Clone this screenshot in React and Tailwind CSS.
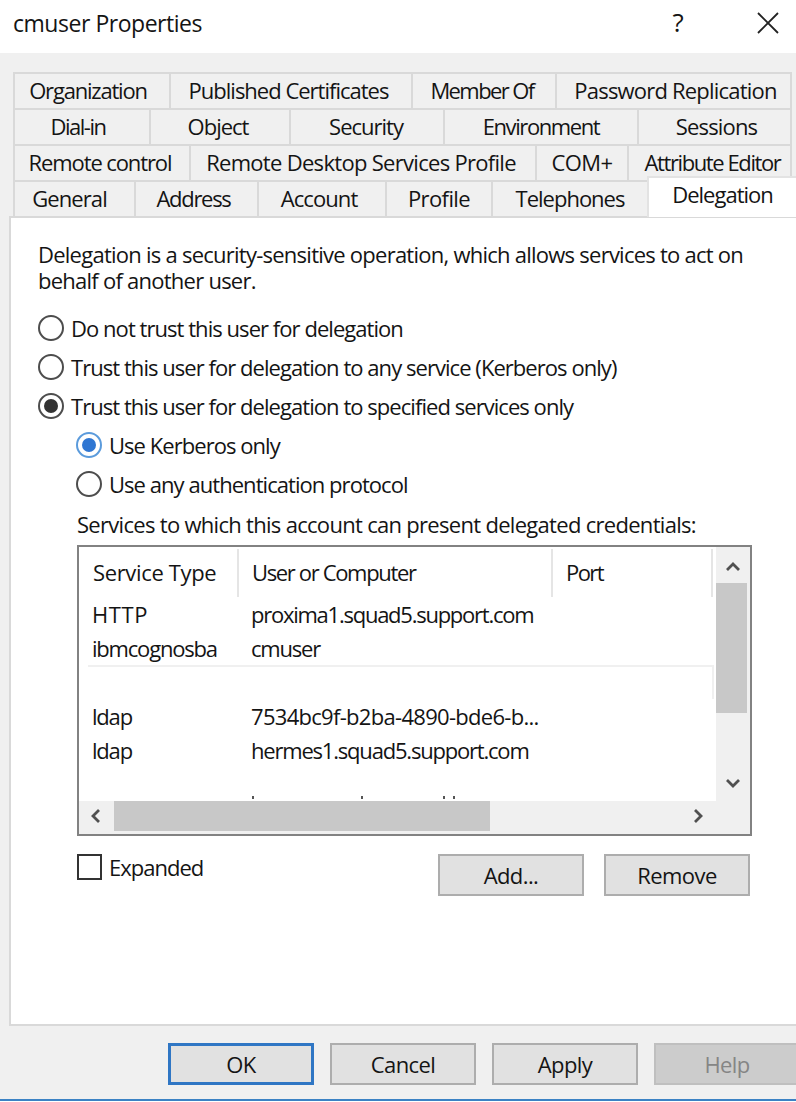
import { useState } from 'react';

const tabRows = [
  [
    ['Organization', 'w-[156px] pr-[8px] tracking-[-1.2px]'],
    ['Published Certificates', 'w-[242px] pr-[5px] tracking-[-1px]'],
    ['Member Of', 'w-[144px] pr-[4px] tracking-[-1.6px]'],
    ['Password Replication', 'w-[237px] pl-[4px] tracking-[-0.8px]'],
  ],
  [
    ['Dial-in', 'w-[136px] pr-[8px] tracking-[-1.5px]'],
    ['Object', 'w-[140px] pr-[4px] tracking-[-1px]'],
    ['Security', 'w-[154px] pr-[2px] tracking-[-1px]'],
    ['Environment', 'w-[194px] tracking-[-1.4px]'],
    ['Sessions', 'w-[155px] pl-[4px] tracking-[-0.85px]'],
  ],
  [
    ['Remote control', 'w-[176px] pr-[4px] tracking-[-1.1px]'],
    ['Remote Desktop Services Profile', 'w-[346px] pr-[4px] tracking-[-0.7px]'],
    ['COM+', 'w-[92px] tracking-[-0.6px]'],
    ['Attribute Editor', 'w-[165px] pl-[6px] tracking-[-1.4px]'],
  ],
  [
    ['General', 'w-[121px] pr-[10px] tracking-[-0.9px]'],
    ['Address', 'w-[123px] pr-[6px] tracking-[-1.3px]'],
    ['Account', 'w-[128px] pr-[6px] tracking-[-0.9px]'],
    ['Profile', 'w-[106px] tracking-[-0.6px]'],
    ['Telephones', 'w-[156px] tracking-[-1px]'],
  ],
];

const services = [
  [['HTTP', 'tracking-[0.6px]'], ['proxima1.squad5.support.com', 'tracking-[-1.25px]']],
  [['ibmcognosba', 'tracking-[-1.2px]'], ['cmuser', 'tracking-[-1.2px]']],
  null,
  [['ldap', 'tracking-[-1.2px]'], ['7534bc9f-b2ba-4890-bde6-b...', 'tracking-[-0.7px]']],
  [['ldap', 'tracking-[-1.2px]'], ['hermes1.squad5.support.com', 'tracking-[-1.2px]']],
];

function Radio({ checked, accent }) {
  return (
    <span
      className={`flex h-[26px] w-[26px] shrink-0 items-center justify-center rounded-full border-2 bg-white ${
        accent ? 'border-[#5b9bdc]' : 'border-[#4d4d4d]'
      }`}
    >
      {checked && (
        <span className={`h-[14px] w-[14px] rounded-full ${accent ? 'bg-[#2f76d2]' : 'bg-[#333333]'}`} />
      )}
    </span>
  );
}

function RadioRow({ label, checked, accent, indent }) {
  return (
    <div className={`flex h-[39px] items-center gap-[7px] tracking-[-0.95px] ${indent ? 'pl-[38px]' : ''}`}>
      <Radio checked={checked} accent={accent} />
      <span>{label}</span>
    </div>
  );
}

function Chevron({ dir }) {
  const d = {
    up: 'M2 11 L8 5 L14 11',
    down: 'M2 5 L8 11 L14 5',
    left: 'M10 2 L4 8 L10 14',
    right: 'M5 2 L11 8 L5 14',
  }[dir];
  return (
    <svg width="16" height="16" viewBox="0 0 16 16" fill="none" stroke="#505050" strokeWidth="2.8">
      <path d={d} />
    </svg>
  );
}

function DialogButton({ children, className = 'border-2 border-[#adadad] bg-[#e1e1e1]' }) {
  return (
    <button type="button" className={`flex h-[42px] w-[146px] shrink-0 items-center justify-center ${className}`}>
      {children}
    </button>
  );
}

function ServiceList() {
  return (
    <div className="ml-[39px] flex h-[291px] w-[675px] flex-col border-2 border-[#828282] bg-[#f0f0f0]">
      <div className="flex h-[254px]">
        <div className="w-[637px] overflow-hidden bg-white">
          <div className="flex h-[50px] pt-[2px]">
            <span className="w-[160px] border-r-2 border-[#e5e5e5] pl-[14px] leading-[47px] tracking-[-0.35px]">Service Type</span>
            <span className="w-[314px] border-r-2 border-[#e5e5e5] pl-[13px] leading-[47px] tracking-[-1.35px]">User or Computer</span>
            <span className="w-[160px] border-r-2 border-[#e5e5e5] pl-[13px] leading-[47px] tracking-[-1.6px]">Port</span>
          </div>
          {services.map((row, i) =>
            row ? (
              <div key={i} className="flex h-[34px] items-center">
                <span className={`w-[160px] pl-[13px] ${row[0][1]}`}>{row[0][0]}</span>
                <span className={`pl-[12px] ${row[1][1]}`}>{row[1][0]}</span>
              </div>
            ) : (
              <div key={i} className="ml-[9px] h-[34px] w-[626px] border-t-2 border-r-2 border-[#f0f0f0]" />
            ),
          )}
          {/* tops of the next row, cut off by the scrollbar */}
          <div className="mt-[29px] flex h-[4px] items-start">
            <span className="ml-[173px] h-[3px] w-[2px] bg-[#555555]" />
            <span className="ml-[107px] h-[3px] w-[2px] bg-[#555555]" />
            <span className="ml-[80px] h-[3px] w-[2px] bg-[#555555]" />
            <span className="ml-[8px] h-[3px] w-[2px] bg-[#555555]" />
          </div>
        </div>
        <div className="flex w-[34px] flex-col pt-[2px]">
          <div className="flex h-[34px] items-center justify-center pt-[2px]">
            <Chevron dir="up" />
          </div>
          <div className="mr-[3px] h-[130px] bg-[#c8c8c8]" />
          <div className="flex flex-1 items-center justify-center pt-[52px]">
            <Chevron dir="down" />
          </div>
        </div>
      </div>
      <div className="flex h-[30px] items-center">
        <div className="flex w-[35px] items-center justify-center">
          <Chevron dir="left" />
        </div>
        <div className="h-full w-[376px] bg-[#c8c8c8]" />
        <div className="flex flex-1 items-center justify-end pr-[44px]">
          <Chevron dir="right" />
        </div>
      </div>
    </div>
  );
}

export default function App() {
  const [expanded, setExpanded] = useState(false);

  return (
    <div
      className="flex h-[1102px] w-[796px] flex-col overflow-hidden bg-white text-[22px] leading-[26px] tracking-[-0.6px] text-[#141414]"
      style={{ fontFamily: '"Open Sans", "Noto Sans", sans-serif' }}
    >
      {/* title bar */}
      <div className="flex h-[53px] shrink-0 items-center pb-[8px] pl-[13px]">
        <span className="flex-1 text-[23px] tracking-[-0.47px]">cmuser Properties</span>
        <span className="mr-[74px] pb-[2px] text-[26px]">?</span>
        <svg className="mr-[17px]" width="22" height="22" viewBox="0 0 22 22" stroke="#222222" strokeWidth="1.8">
          <path d="M1 1 L21 21 M21 1 L1 21" />
        </svg>
      </div>

      <div className="flex flex-1 flex-col bg-[#f0f0f0] pt-[19px]">
        {/* tab rows */}
        <div className="ml-[13px]">
          {tabRows.map((row, i) => (
            <div key={i} className="flex h-[36px]">
              {row.map(([label, width], j) => (
                <div
                  key={label}
                  className={`${width} flex items-center justify-center border-t-2 border-l-2 border-[#d9d9d9] pb-[2px] ${
                    j === row.length - 1 && i < 3 ? 'border-r-2' : ''
                  }`}
                >
                  {label}
                </div>
              ))}
              {i === 3 && (
                <div className="relative z-10 -mt-[4px] flex h-[41px] w-[149px] items-center justify-center border-t-2 border-l-2 border-[#e3e3e3] bg-white pb-[7px] tracking-[-1px]">
                  Delegation
                </div>
              )}
            </div>
          ))}
        </div>

        {/* delegation page */}
        <div className="ml-[9px] h-[810px] shrink-0 border-y-2 border-l-2 border-[#d9d9d9] bg-white pt-[23px] pl-[27px]">
          <p className="w-[730px] tracking-[-0.75px]">
            Delegation is a security-sensitive operation, which allows services to act on behalf of another user.
          </p>
          <div className="mt-[15px]">
            <RadioRow label="Do not trust this user for delegation" />
            <RadioRow label="Trust this user for delegation to any service (Kerberos only)" />
            <RadioRow label="Trust this user for delegation to specified services only" checked />
            <RadioRow label="Use Kerberos only" checked accent indent />
            <RadioRow label="Use any authentication protocol" indent />
          </div>
          <p className="mt-[8px] ml-[39px] h-[34px] tracking-[-0.7px]">
            Services to which this account can present delegated credentials:
          </p>
          <ServiceList />
          <div className="mt-[18px] ml-[39px] flex w-[673px] items-start">
            <button
              type="button"
              onClick={() => setExpanded(!expanded)}
              className="flex h-[26px] items-center gap-[7px] tracking-[-1px]"
            >
              <span className="h-[26px] w-[25px] border-2 border-[#333333] bg-white" />
              <span>Expanded</span>
            </button>
            <div className="ml-auto flex gap-[20px]">
              <DialogButton>Add...</DialogButton>
              <DialogButton>Remove</DialogButton>
            </div>
          </div>
        </div>

        {/* dialog buttons */}
        <div className="flex gap-[16px] pt-[17px] pl-[168px]">
          <DialogButton className="border-[3px] border-[#2f76c4] bg-[#e1e1e1]">OK</DialogButton>
          <DialogButton>Cancel</DialogButton>
          <DialogButton>Apply</DialogButton>
          <DialogButton className="border-2 border-[#bfbfbf] bg-[#cccccc] text-[#858585]">Help</DialogButton>
        </div>
      </div>
      <div className="h-[2px] shrink-0 bg-[#3b82c4]" />
      <div className="h-[1px] shrink-0 bg-white" />
    </div>
  );
}
